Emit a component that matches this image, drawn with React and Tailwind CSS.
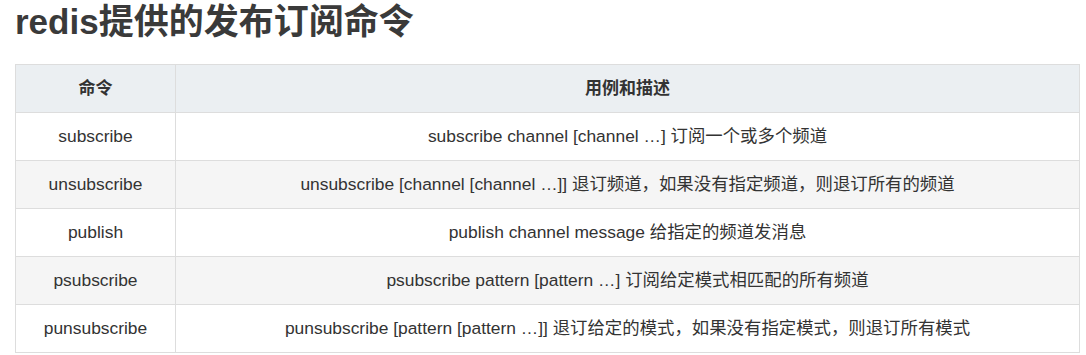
import React from "react";

const rows = [
    ["subscribe", "subscribe channel [channel …] 订阅一个或多个频道"],
    ["unsubscribe", "unsubscribe [channel [channel …]] 退订频道，如果没有指定频道，则退订所有的频道"],
    ["publish", "publish channel message 给指定的频道发消息"],
    ["psubscribe", "psubscribe pattern [pattern …] 订阅给定模式相匹配的所有频道"],
    ["punsubscribe", "punsubscribe [pattern [pattern …]] 退订给定的模式，如果没有指定模式，则退订所有模式"],
];

const App = () => {
    return (
        <div className="bg-white min-h-screen px-[15px] text-[#333]" style={{ fontFamily: '"Liberation Sans", Arial, "Noto Sans CJK SC", sans-serif' }}>
            <h1 className="text-[35px] font-bold leading-[42px] pt-[1px] h-[64px] text-[#3a3a3a]">redis提供的发布订阅命令</h1>
            <table className="w-[1065px] border-collapse text-[17.4px]">
                <thead>
                    <tr className="bg-[#ebeff2] h-[48px]">
                        <th className="w-[160px] border border-[#dddddd] font-bold text-[17px]">命令</th>
                        <th className="border border-[#dddddd] font-bold text-[17px]">用例和描述</th>
                    </tr>
                </thead>
                <tbody>
                    {
                        rows.map((row, id) => {
                            return (
                                <tr key={id} className={id % 2 === 1 ? "bg-[#f5f5f5] h-[48px]" : "bg-white h-[48px]"}>
                                    <td className="border border-[#dddddd] text-center">{row[0]}</td>
                                    <td className="border border-[#dddddd] text-center">{row[1]}</td>
                                </tr>
                            );
                        })
                    }
                </tbody>
            </table>
        </div>
    );
};
export default App;
